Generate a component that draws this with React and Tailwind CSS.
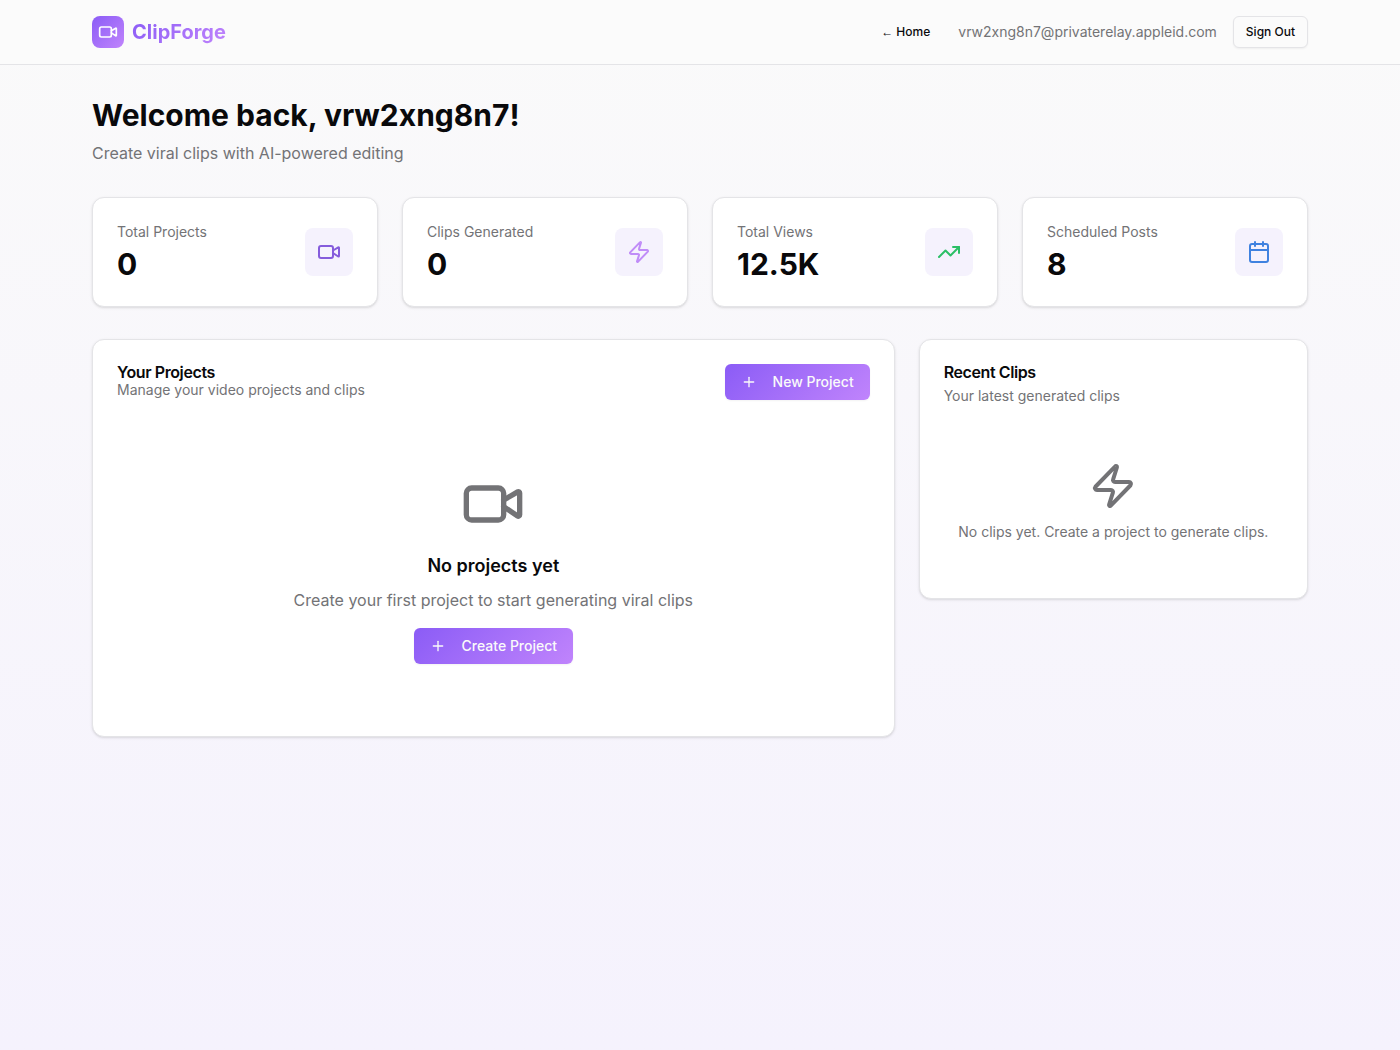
import { Calendar, Plus, TrendingUp, Video, Zap } from 'lucide-react'

const STATS = [
  { label: 'Total Projects', value: '0', icon: Video, color: 'text-[#855cdc]' },
  { label: 'Clips Generated', value: '0', icon: Zap, color: 'text-[#c08cf8]' },
  { label: 'Total Views', value: '12.5K', icon: TrendingUp, color: 'text-[#2bbf66]' },
  { label: 'Scheduled Posts', value: '8', icon: Calendar, color: 'text-[#3f82e0]' },
]

function Card({ className = '', children }) {
  return (
    <div className={`rounded-xl border border-[#e4e4e7] bg-white shadow ${className}`}>
      {children}
    </div>
  )
}

function StatCard({ label, value, icon: Icon, color }) {
  return (
    <Card className="p-6">
      <div className="flex items-center justify-between">
        <div>
          <p className="text-sm text-[#737376]">{label}</p>
          <p className="text-3xl font-bold mt-1">{value}</p>
        </div>
        <div className="w-12 h-12 rounded-lg bg-[#f5f2fd] flex items-center justify-center">
          <Icon className={`w-6 h-6 ${color}`} />
        </div>
      </div>
    </Card>
  )
}

function PrimaryButton({ children }) {
  return (
    <button className="inline-flex items-center justify-center gap-2 h-9 px-4 rounded-md bg-linear-[135deg] from-[#8b5cf6] to-[#c084fc] text-sm font-medium text-[#fafafa] shadow-xs">
      <Plus className="w-4 h-4 mr-2" />
      {children}
    </button>
  )
}

export default function App() {
  return (
    <div className="min-h-screen bg-linear-to-b from-[#fafafa] to-[#f5f2fd] font-['Inter',sans-serif] text-[#09090b]">
      <header className="border-b border-[#e4e4e7] bg-[#fbfbfb]">
        <div className="max-w-7xl mx-auto px-8 h-16 flex items-center justify-between">
          <div className="flex items-center gap-2">
            <div className="w-8 h-8 rounded-lg bg-linear-[135deg] from-[#8b5cf6] to-[#c084fc] flex items-center justify-center">
              <Video className="w-5 h-5 text-white" />
            </div>
            <span className="text-xl font-bold bg-linear-[135deg] from-[#8b5cf6] to-[#c084fc] bg-clip-text text-transparent">ClipForge</span>
          </div>
          <div className="flex items-center gap-4">
            <a href="#" className="px-3 py-2 rounded-md text-xs font-medium">
              <span className="font-['Liberation_Sans',sans-serif]">←</span> Home
            </a>
            <span className="text-sm text-[#737376]">vrw2xng8n7@privaterelay.appleid.com</span>
            <button className="h-8 px-3 rounded-md border border-[#e4e4e7] bg-[#fbfbfb] text-xs font-medium shadow-xs">Sign Out</button>
          </div>
        </div>
      </header>

      <main className="max-w-7xl mx-auto px-8 py-8">
        <div className="mb-8">
          <h1 className="text-3xl font-bold mb-2">Welcome back, vrw2xng8n7!</h1>
          <p className="text-[#737376]">Create viral clips with AI-powered editing</p>
        </div>

        <div className="grid grid-cols-1 md:grid-cols-4 gap-6 mb-8">
          {STATS.map(s => <StatCard key={s.label} {...s} />)}
        </div>

        <div className="grid grid-cols-1 lg:grid-cols-3 gap-6 items-start">
          <Card className="lg:col-span-2">
            <div className="p-6 flex items-center justify-between">
              <div>
                <h2 className="font-semibold leading-none tracking-tight">Your Projects</h2>
                <p className="text-sm text-[#737376]">Manage your video projects and clips</p>
              </div>
              <PrimaryButton>New Project</PrimaryButton>
            </div>
            <div className="px-6 pb-6">
              <div className="py-12 text-center">
                <Video className="w-16 h-16 mx-auto mb-4 text-[#737376]" />
                <h3 className="text-lg font-semibold mb-2">No projects yet</h3>
                <p className="text-[#737376] mb-4">Create your first project to start generating viral clips</p>
                <PrimaryButton>Create Project</PrimaryButton>
              </div>
            </div>
          </Card>

          <Card>
            <div className="p-6 flex flex-col gap-1.5">
              <h2 className="font-semibold leading-none tracking-tight">Recent Clips</h2>
              <p className="text-sm text-[#737376]">Your latest generated clips</p>
            </div>
            <div className="px-6 pb-6">
              <div className="py-8 text-center">
                <Zap className="w-12 h-12 mx-auto mb-3 text-[#737376]" />
                <p className="text-sm text-[#737376]">No clips yet. Create a project to generate clips.</p>
              </div>
            </div>
          </Card>
        </div>
      </main>
    </div>
  )
}
